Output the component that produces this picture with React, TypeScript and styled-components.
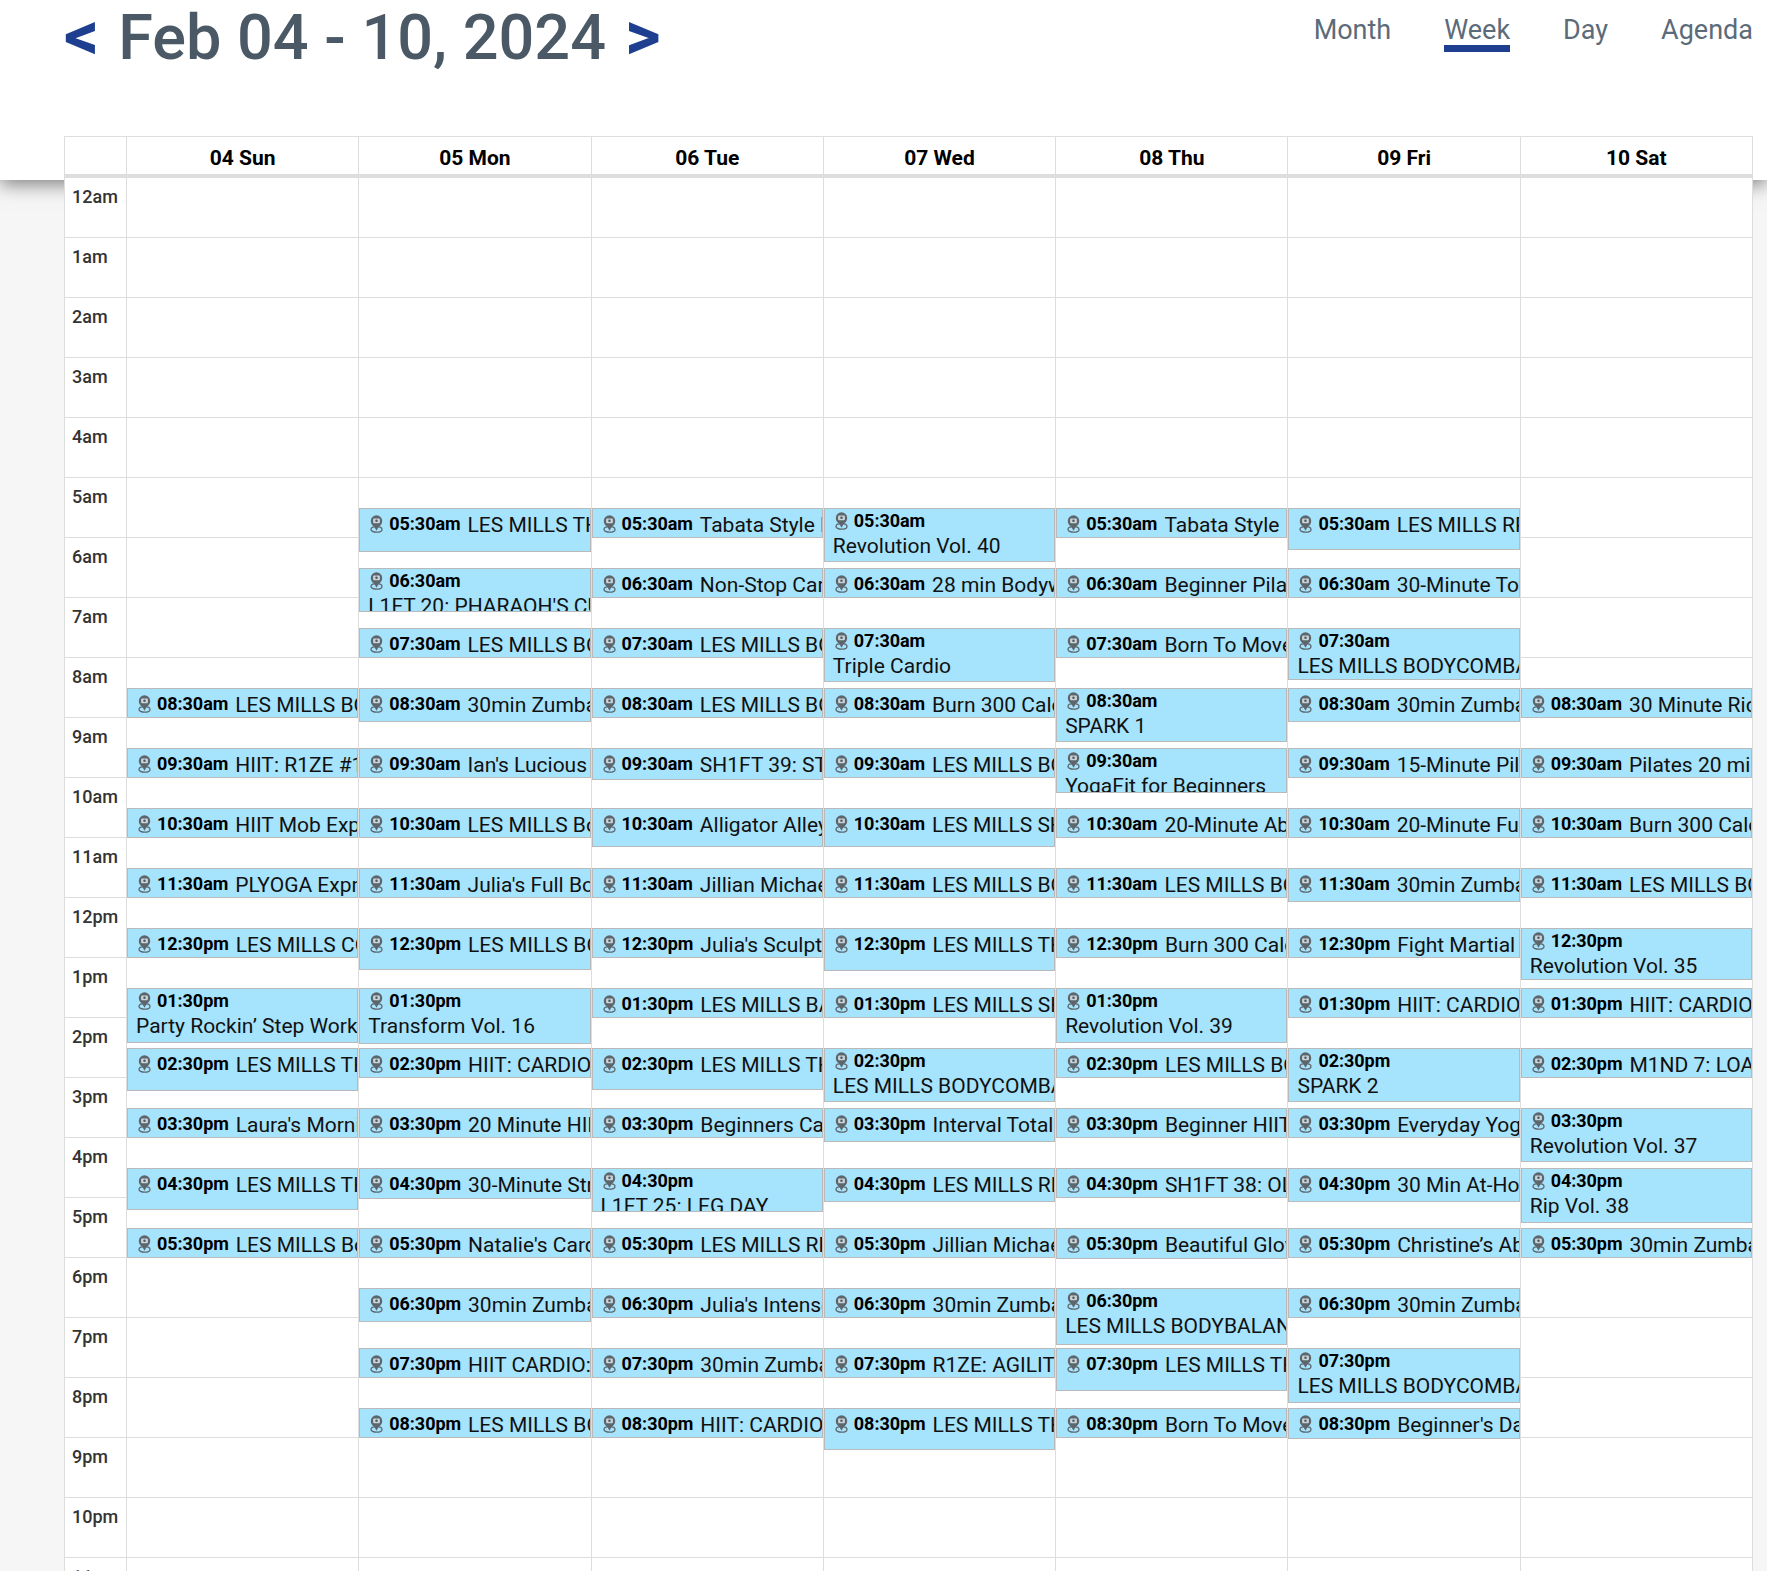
import React from "react";
import styled, { createGlobalStyle } from "styled-components";

type EventItem = {
  hour: number;
  title: string;
  height?: number;
  stacked?: boolean;
};

const GlobalStyle = createGlobalStyle`
  html, body {
    margin: 0;
    height: 1571px;
    overflow: hidden;
    background: #f6f6f6;
    font-family: Roboto, "Liberation Sans", sans-serif;
  }
  * {
    box-sizing: border-box;
  }
`;

const TopBar = styled.header`
  height: 180px;
  background: #fff;
  box-shadow: 0 4px 18px rgba(0, 0, 0, 0.5);
  display: flex;
  justify-content: space-between;
  align-items: flex-start;
  padding: 0 14px 0 64px;
`;

const DateTitle = styled.h1`
  margin: 0;
  font-size: 63px;
  line-height: 72px;
  font-weight: 500;
  color: #4a5965;
  display: flex;
  align-items: baseline;
  gap: 19px;
  white-space: nowrap;
`;

const Arrow = styled.span`
  color: #1e3f8f;
  font-size: 69px;
  font-weight: 700;
`;

const ViewTabs = styled.nav`
  display: flex;
  gap: 53px;
  padding-top: 15px;
`;

const ViewTab = styled.span<{ $active?: boolean }>`
  font-size: 27px;
  line-height: 30px;
  color: #5c6b7a;
  height: 37px;
  border-bottom: 7px solid ${(p) => (p.$active ? "#1e3f8f" : "transparent")};
`;

const Calendar = styled.section`
  position: relative;
  margin: -44px 14px 0 64px;
  background: #fff;
  border: 1px solid #ddd;
  border-bottom: none;
`;

const HeaderRow = styled.div`
  display: grid;
  grid-template-columns: 61px repeat(7, 1fr);
  height: 41px;
  border-bottom: 4px solid #ddd;
`;

const DayHeading = styled.div`
  border-left: 1px solid #ddd;
  font-size: 21px;
  font-weight: 700;
  color: #000;
  text-align: center;
  line-height: 42px;
`;

const TimeGrid = styled.div`
  display: grid;
  grid-template-columns: 61px repeat(7, 1fr);
`;

const HourGutter = styled.div`
  display: flex;
  flex-direction: column;
`;

const HourLabel = styled.div`
  height: 60px;
  flex: none;
  border-bottom: 1px solid #ddd;
  padding: 8px 0 0 7px;
  font-size: 18px;
  line-height: 22px;
  font-weight: 500;
  color: #333;
`;

const DayColumn = styled.div`
  border-left: 1px solid #ddd;
  display: grid;
  min-width: 0;
  grid-template-rows: repeat(48, 30px);
  background: repeating-linear-gradient(
    to bottom,
    transparent 0,
    transparent 59px,
    #ddd 59px,
    #ddd 60px
  );
`;

const EventCard = styled.div<{ $slot: number; $height: number; $stacked: boolean }>`
  grid-row: ${(p) => p.$slot + 1} / span 1;
  grid-column: 1;
  align-self: start;
  height: ${(p) => p.$height}px;
  min-width: 0;
  overflow: hidden;
  white-space: nowrap;
  background: #a6e3fc;
  border: 1px solid #b9b9b9;
  display: flex;
  flex-direction: ${(p) => (p.$stacked ? "column" : "row")};
  padding: ${(p) => (p.$stacked ? "0" : "3px")} 0 0 ${(p) => (p.$stacked ? "8px" : "10px")};
`;

const TimeLine = styled.div<{ $stacked: boolean }>`
  display: flex;
  flex: none;
  align-items: center;
  gap: 6px;
  height: 23px;
  padding-left: ${(p) => (p.$stacked ? "2px" : "0")};
`;

const TimeText = styled.span`
  font-size: 18px;
  font-weight: 700;
  letter-spacing: -0.05px;
  color: #000;
`;

const EventTitle = styled.span<{ $stacked: boolean }>`
  font-size: 21px;
  line-height: 24px;
  font-weight: 400;
  color: #111;
  margin: ${(p) => (p.$stacked ? "2px 0 0" : "1px 0 0 7px")};
`;

const PinIcon = () => (
  <svg width="13" height="18" viewBox="0 0 12 17" style={{ flex: "none" }}>
    <ellipse cx="6" cy="13.6" rx="5.2" ry="2.6" fill="none" stroke="#5d666c" strokeWidth="1.2" />
    <path d="M6 0.2a5.4 5.4 0 0 1 5.4 5.4c0 2.6-1.6 4.3-3.3 5.4L6 14.8 3.9 11C2.2 9.9 0.6 8.2 0.6 5.6A5.4 5.4 0 0 1 6 0.2z" fill="#5d666c" />
    <rect x="2.8" y="3.2" width="6.4" height="4.6" rx="1" fill="#c8d4da" />
    <circle cx="6" cy="5.5" r="1.2" fill="#4f5a63" />
  </svg>
);

const days: { label: string; events: EventItem[] }[] = [
  {
    label: "04 Sun",
    events: [
      { hour: 8, title: "LES MILLS BODYPUMP" },
      { hour: 9, title: "HIIT: R1ZE #1 Total" },
      { hour: 10, title: "HIIT Mob Express" },
      { hour: 11, title: "PLYOGA Express" },
      { hour: 12, title: "LES MILLS CORE" },
      { hour: 13, title: "Party Rockin’ Step Workout", height: 55, stacked: true },
      { hour: 14, title: "LES MILLS THE TRIP", height: 43 },
      { hour: 15, title: "Laura's Morning" },
      { hour: 16, title: "LES MILLS THE TRIP", height: 42 },
      { hour: 17, title: "LES MILLS Bodybalance" },
    ],
  },
  {
    label: "05 Mon",
    events: [
      { hour: 5, title: "LES MILLS THE TRIP", height: 44 },
      { hour: 6, title: "L1FT 20: PHARAOH'S CURSE", height: 44, stacked: true },
      { hour: 7, title: "LES MILLS BODYPUMP" },
      { hour: 8, title: "30min Zumba", height: 34 },
      { hour: 9, title: "Ian's Lucious" },
      { hour: 10, title: "LES MILLS Bodypump" },
      { hour: 11, title: "Julia's Full Body" },
      { hour: 12, title: "LES MILLS BODYPUMP", height: 42 },
      { hour: 13, title: "Transform Vol. 16", height: 56, stacked: true },
      { hour: 14, title: "HIIT: CARDIO" },
      { hour: 15, title: "20 Minute HIIT" },
      { hour: 16, title: "30-Minute Strength", height: 31 },
      { hour: 17, title: "Natalie's Cardio" },
      { hour: 18, title: "30min Zumba", height: 34 },
      { hour: 19, title: "HIIT CARDIO: Total" },
      { hour: 20, title: "LES MILLS BODYPUMP" },
    ],
  },
  {
    label: "06 Tue",
    events: [
      { hour: 5, title: "Tabata Style HIIT" },
      { hour: 6, title: "Non-Stop Cardio" },
      { hour: 7, title: "LES MILLS BODYPUMP" },
      { hour: 8, title: "LES MILLS BODYPUMP" },
      { hour: 9, title: "SH1FT 39: STRENGTH", height: 32 },
      { hour: 10, title: "Alligator Alley", height: 39 },
      { hour: 11, title: "Jillian Michaels" },
      { hour: 12, title: "Julia's Sculpt" },
      { hour: 13, title: "LES MILLS BARRE" },
      { hour: 14, title: "LES MILLS THE TRIP", height: 42 },
      { hour: 15, title: "Beginners Cardio" },
      { hour: 16, title: "L1FT 25: LEG DAY", height: 44, stacked: true },
      { hour: 17, title: "LES MILLS RPM" },
      { hour: 18, title: "Julia's Intense" },
      { hour: 19, title: "30min Zumba" },
      { hour: 20, title: "HIIT: CARDIO" },
    ],
  },
  {
    label: "07 Wed",
    events: [
      { hour: 5, title: "Revolution Vol. 40", height: 54, stacked: true },
      { hour: 6, title: "28 min Bodyweight" },
      { hour: 7, title: "Triple Cardio", height: 54, stacked: true },
      { hour: 8, title: "Burn 300 Calories" },
      { hour: 9, title: "LES MILLS BODYPUMP" },
      { hour: 10, title: "LES MILLS SH'BAM", height: 39 },
      { hour: 11, title: "LES MILLS BODYPUMP" },
      { hour: 12, title: "LES MILLS THE TRIP", height: 43 },
      { hour: 13, title: "LES MILLS SH'BAM" },
      { hour: 14, title: "LES MILLS BODYCOMBAT", height: 54, stacked: true },
      { hour: 15, title: "Interval Total", height: 34 },
      { hour: 16, title: "LES MILLS RPM", height: 34 },
      { hour: 17, title: "Jillian Michaels" },
      { hour: 18, title: "30min Zumba" },
      { hour: 19, title: "R1ZE: AGILITY" },
      { hour: 20, title: "LES MILLS THE TRIP", height: 42 },
    ],
  },
  {
    label: "08 Thu",
    events: [
      { hour: 5, title: "Tabata Style HIIT" },
      { hour: 6, title: "Beginner Pilates" },
      { hour: 7, title: "Born To Move" },
      { hour: 8, title: "SPARK 1", height: 54, stacked: true },
      { hour: 9, title: "YogaFit for Beginners", height: 45, stacked: true },
      { hour: 10, title: "20-Minute Abs" },
      { hour: 11, title: "LES MILLS BODYPUMP" },
      { hour: 12, title: "Burn 300 Calories" },
      { hour: 13, title: "Revolution Vol. 39", height: 55, stacked: true },
      { hour: 14, title: "LES MILLS BODYPUMP" },
      { hour: 15, title: "Beginner HIIT" },
      { hour: 16, title: "SH1FT 38: OLYMPIC" },
      { hour: 17, title: "Beautiful Glow", height: 31 },
      { hour: 18, title: "LES MILLS BODYBALANCE", height: 57, stacked: true },
      { hour: 19, title: "LES MILLS THE TRIP", height: 43 },
      { hour: 20, title: "Born To Move" },
    ],
  },
  {
    label: "09 Fri",
    events: [
      { hour: 5, title: "LES MILLS RPM", height: 42 },
      { hour: 6, title: "30-Minute Total" },
      { hour: 7, title: "LES MILLS BODYCOMBAT", height: 52, stacked: true },
      { hour: 8, title: "30min Zumba", height: 34 },
      { hour: 9, title: "15-Minute Pilates" },
      { hour: 10, title: "20-Minute Full" },
      { hour: 11, title: "30min Zumba", height: 34 },
      { hour: 12, title: "Fight Martial Arts" },
      { hour: 13, title: "HIIT: CARDIO" },
      { hour: 14, title: "SPARK 2", height: 54, stacked: true },
      { hour: 15, title: "Everyday Yoga" },
      { hour: 16, title: "30 Min At-Home", height: 34 },
      { hour: 17, title: "Christine’s Abs" },
      { hour: 18, title: "30min Zumba" },
      { hour: 19, title: "LES MILLS BODYCOMBAT", height: 55, stacked: true },
      { hour: 20, title: "Beginner's Dance", height: 31 },
    ],
  },
  {
    label: "10 Sat",
    events: [
      { hour: 8, title: "30 Minute Ride" },
      { hour: 9, title: "Pilates 20 min" },
      { hour: 10, title: "Burn 300 Calories" },
      { hour: 11, title: "LES MILLS BODYPUMP" },
      { hour: 12, title: "Revolution Vol. 35", height: 52, stacked: true },
      { hour: 13, title: "HIIT: CARDIO" },
      { hour: 14, title: "M1ND 7: LOAD" },
      { hour: 15, title: "Revolution Vol. 37", height: 54, stacked: true },
      { hour: 16, title: "Rip Vol. 38", height: 55, stacked: true },
      { hour: 17, title: "30min Zumba" },
    ],
  },
];

const hourName = (hour: number) => {
  const h = hour % 12 === 0 ? 12 : hour % 12;
  return `${h}${hour < 12 ? "am" : "pm"}`;
};

const startTime = (hour: number) => {
  const h = hour % 12 === 0 ? 12 : hour % 12;
  return `${String(h).padStart(2, "0")}:30${hour < 12 ? "am" : "pm"}`;
};

const hours = Array.from({ length: 24 }, (_, i) => i);

const App: React.FC = () => {
  return (
    <>
      <GlobalStyle />
      <TopBar>
        <DateTitle>
          <Arrow>&lt;</Arrow>
          <span>Feb 04 - 10, 2024</span>
          <Arrow>&gt;</Arrow>
        </DateTitle>
        <ViewTabs>
          <ViewTab>Month</ViewTab>
          <ViewTab $active>Week</ViewTab>
          <ViewTab>Day</ViewTab>
          <ViewTab>Agenda</ViewTab>
        </ViewTabs>
      </TopBar>
      <Calendar>
        <HeaderRow>
          <div />
          {days.map((day) => (
            <DayHeading key={day.label}>{day.label}</DayHeading>
          ))}
        </HeaderRow>
        <TimeGrid>
          <HourGutter>
            {hours.map((hour) => (
              <HourLabel key={hour}>{hourName(hour)}</HourLabel>
            ))}
          </HourGutter>
          {days.map((day) => (
            <DayColumn key={day.label}>
              {day.events.map((event) => {
                const stacked = !!event.stacked;
                return (
                  <EventCard
                    key={event.hour}
                    $slot={event.hour * 2 + 1}
                    $height={event.height ?? 30}
                    $stacked={stacked}
                  >
                    <TimeLine $stacked={stacked}>
                      <PinIcon />
                      <TimeText>{startTime(event.hour)}</TimeText>
                    </TimeLine>
                    <EventTitle $stacked={stacked}>{event.title}</EventTitle>
                  </EventCard>
                );
              })}
            </DayColumn>
          ))}
        </TimeGrid>
      </Calendar>
    </>
  );
};

export default App;
